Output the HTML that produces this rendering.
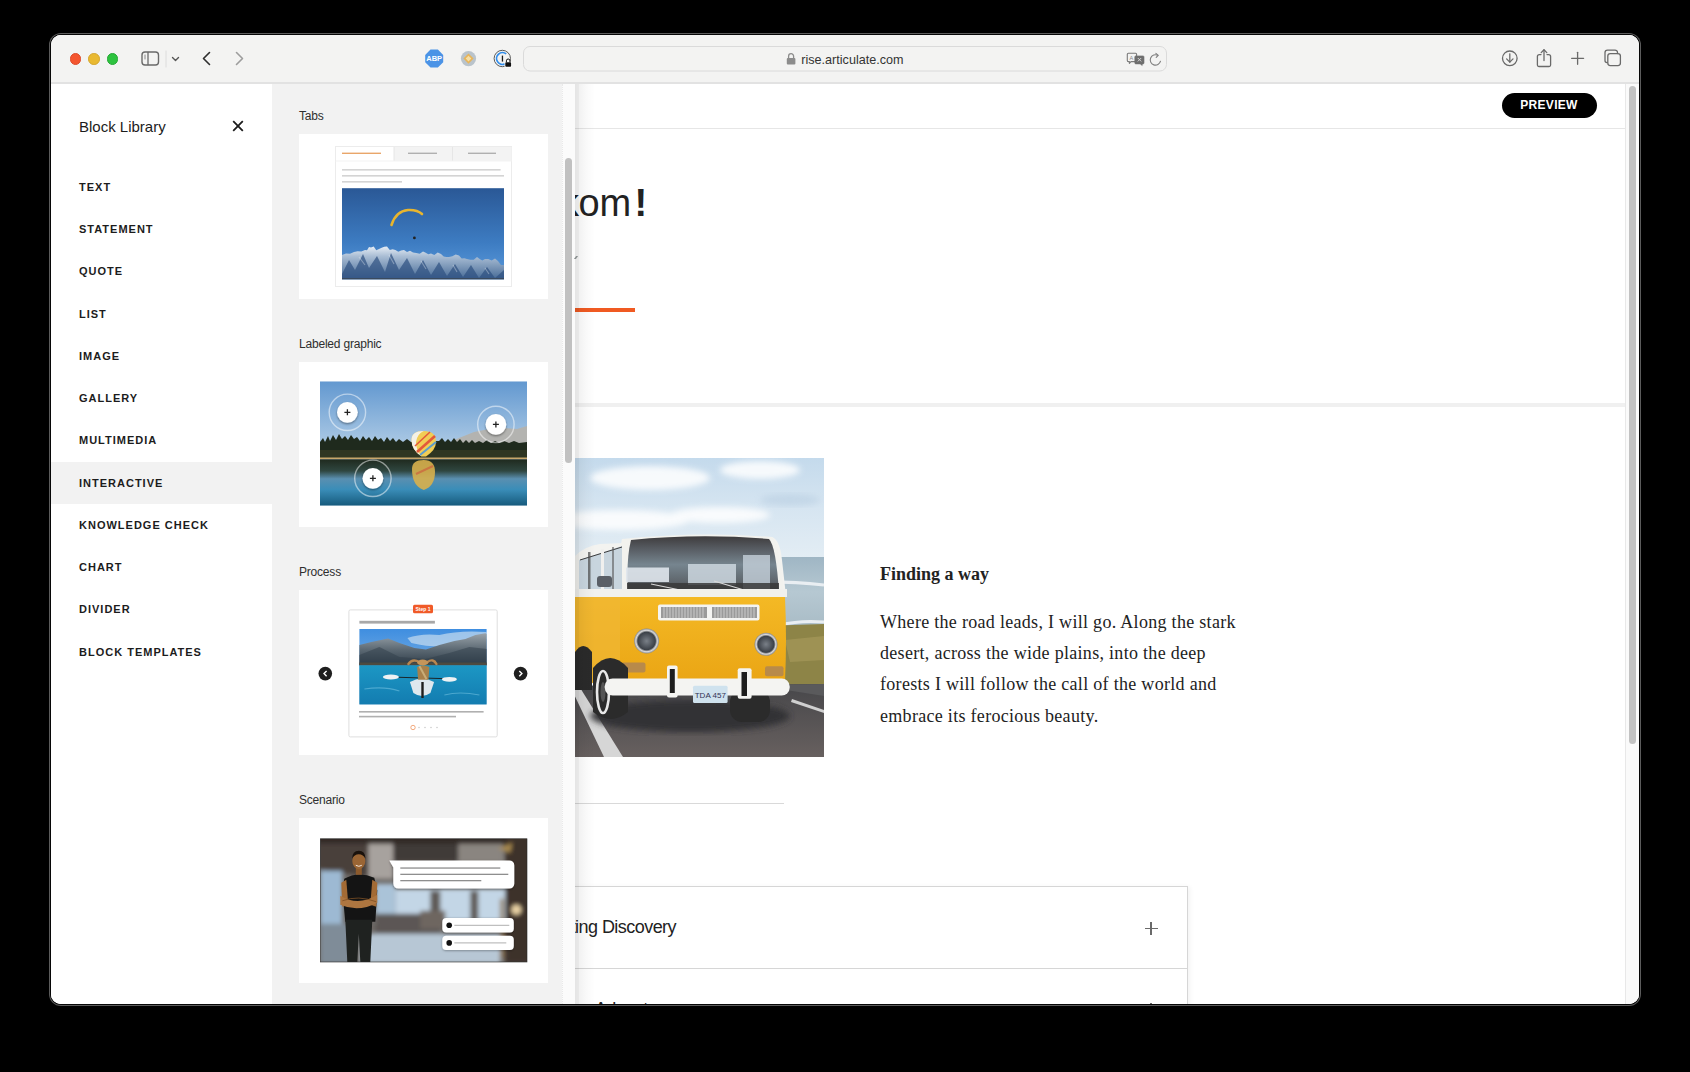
<!DOCTYPE html>
<html><head><meta charset="utf-8">
<style>
*{margin:0;padding:0;box-sizing:border-box}
html,body{width:1690px;height:1072px;background:#000;overflow:hidden;font-family:"Liberation Sans",sans-serif}
.a{position:absolute}
#win{position:absolute;left:51px;top:35px;width:1588px;height:969px;border-radius:10px;overflow:hidden;background:#fff;box-shadow:0 0 0 1px #070707,0 0 0 2px #5c5c5c}
#tb{position:absolute;left:0;top:0;width:1588px;height:49px;background:#f3f3f2;border-bottom:2px solid #e2e2e2}
#main{position:absolute;left:0;top:0;width:1588px;height:969px;background:#fff}
#side{position:absolute;left:0;top:49px;width:221px;height:920px;background:#fff}
#panel{position:absolute;left:221px;top:49px;width:290px;height:920px;background:#f2f2f2}
.nav{position:absolute;left:28px;font-size:11px;font-weight:bold;letter-spacing:1px;color:#1c1c1c;line-height:14px;white-space:nowrap}
.lbl{position:absolute;left:27px;font-size:12px;letter-spacing:-0.2px;color:#2e2e2e;line-height:14px;white-space:nowrap}
.card{position:absolute;left:27px;width:249px;height:165px;background:#fff}
.dot{position:absolute;top:18px;width:12px;height:12px;border-radius:50%}
</style></head><body>
<div id="win">
  <!-- main content -->
  <div id="main">
    <!-- header bar -->
    <div class="a" style="left:511px;top:93px;width:1063px;height:1px;background:#e6e6e6"></div>
    <div class="a" style="left:1451px;top:58px;width:95px;height:25px;border-radius:13px;background:#000;color:#fff;font-weight:bold;font-size:12px;letter-spacing:0.3px;text-align:center;line-height:25px;padding-right:1px">PREVIEW</div>
    <!-- title -->
    <div class="a" style="left:0;top:146px;width:528px;text-align:right;font-size:38px;color:#222;line-height:44px;white-space:nowrap">Welcome to Telk</div>
    <div class="a" style="left:527.5px;top:146px;font-size:38px;color:#222;line-height:44px">o</div>
    <div class="a" style="left:548.5px;top:146px;font-size:38px;color:#222;line-height:44px">m</div>
    <div class="a" style="left:583.5px;top:146px;font-size:38px;color:#222;line-height:44px;font-weight:bold">!</div>
    <div class="a" style="left:480px;top:273px;width:104px;height:4px;background:#f05a22"></div>
    <!-- section divider -->
    <div class="a" style="left:511px;top:368px;width:1063px;height:4px;background:#f0f0f0"></div>
    <!-- van image -->
    <svg class="a" id="van" style="left:470px;top:423px" width="303" height="299" viewBox="521 458 303 299">
      <defs>
        <linearGradient id="vsky" x1="0" y1="0" x2="0" y2="1">
          <stop offset="0" stop-color="#c4daec"/><stop offset="0.5" stop-color="#d6e5f1"/><stop offset="1" stop-color="#e3edf4"/>
        </linearGradient>
        <linearGradient id="vsea" x1="0" y1="0" x2="0" y2="1">
          <stop offset="0" stop-color="#9fb6c4"/><stop offset="0.5" stop-color="#b6c8d2"/><stop offset="1" stop-color="#a9bcc6"/>
        </linearGradient>
        <linearGradient id="vyel" x1="0" y1="0" x2="0" y2="1">
          <stop offset="0" stop-color="#f4b925"/><stop offset="1" stop-color="#eaa514"/>
        </linearGradient>
        <radialGradient id="vhl"><stop offset="0" stop-color="#7a8088"/><stop offset="0.7" stop-color="#3c4148"/><stop offset="0.85" stop-color="#d9d9d9"/><stop offset="1" stop-color="#8a8a8a"/></radialGradient>
        <filter id="vb"><feGaussianBlur stdDeviation="3"/></filter>
      </defs>
      <rect x="521" y="458" width="303" height="100" fill="url(#vsky)"/>
      <g filter="url(#vb)" fill="#fff" opacity="0.85">
        <ellipse cx="650" cy="478" rx="60" ry="12"/>
        <ellipse cx="760" cy="470" rx="40" ry="9"/>
        <ellipse cx="620" cy="520" rx="70" ry="10"/>
        <ellipse cx="720" cy="515" rx="50" ry="8"/>
      </g>
      <ellipse cx="790" cy="500" rx="30" ry="6" fill="#b9cfe2" opacity="0.6" filter="url(#vb)"/>
      <rect x="521" y="557" width="303" height="70" fill="url(#vsea)"/>
      <path d="M730 583 Q780 580 824 585" stroke="#e9eef2" stroke-width="3" fill="none"/>
      <path d="M780 625 Q800 620 824 622" stroke="#e9eef2" stroke-width="3" fill="none"/>
      <path d="M760 626 L824 624 L824 688 L760 688Z" fill="#8d8447"/>
      <path d="M785 640 L824 636 L824 660 L790 662Z" fill="#a39658" opacity="0.8"/>
      <linearGradient id="vroad" x1="0" y1="0" x2="0" y2="1"><stop offset="0" stop-color="#47474a"/><stop offset="1" stop-color="#67605f"/></linearGradient>
      <path d="M521 686 L824 684 L824 757 L521 757Z" fill="url(#vroad)"/>
      <path d="M690 686 L760 686 L824 696 L824 684Z" fill="#5a5a5c"/>
      <polygon points="570,686 579,686 623,757 604,757" fill="#d6d6d6"/>
      <polygon points="792,699 824,710 824,713 791,702" fill="#d0d0d0"/>
      <ellipse cx="690" cy="716" rx="100" ry="16" fill="#333336" filter="url(#vb)"/>
      <rect x="730" y="690" width="40" height="32" rx="12" fill="#2b2b2b"/>
      <!-- van roof / windows -->
      <linearGradient id="vws" x1="0" y1="0" x2="0" y2="1"><stop offset="0" stop-color="#3e3c3d"/><stop offset="0.2" stop-color="#55595f"/><stop offset="0.5" stop-color="#76858f"/><stop offset="0.8" stop-color="#5f666c"/><stop offset="1" stop-color="#3a3a3c"/></linearGradient>
      <path d="M575 556 Q585 546 600 544 L772 537 Q780 540 782 560 L786 596 L575 598Z" fill="#f3f3f0"/>
      <path d="M622 539 Q700 531 772 537 Q780 544 784 595 L620 595 Q617 560 622 539Z" fill="#f2f2ee"/>
      <path d="M631 540 Q700 533 769 539 Q776 546 779 593 L628 593 Q626 560 631 540Z" fill="url(#vws)"/>
      <rect x="626" y="567.5" width="43" height="14.5" fill="#dfe6ec" opacity="0.9"/>
      <rect x="688" y="564" width="48" height="21" fill="#cdd7df" opacity="0.85"/>
      <rect x="743" y="555" width="27" height="35" fill="#c4d0da" opacity="0.8"/>
      <rect x="627" y="583" width="152" height="10" fill="#3a3a3a" opacity="0.85"/>
      <path d="M651 584 L685 591" stroke="#d9d9d9" stroke-width="1.2"/>
      <path d="M714 581 L754 593" stroke="#d9d9d9" stroke-width="1.2"/>
      <path d="M579 560 L622 546 L622 590 L579 592Z" fill="#c8d5de"/>
      <path d="M580 560 L622 547" stroke="#3c3c3c" stroke-width="1"/>
      <rect x="588" y="552" width="2.5" height="39" fill="#4a4a4a" opacity="0.7"/>
      <rect x="601" y="549" width="3" height="42" fill="#f0f0ee"/>
      <rect x="612" y="547" width="2" height="44" fill="#5a5a5a" opacity="0.6"/>
      <rect x="597" y="576" width="15" height="11" rx="3" fill="#5a5f66"/>
      <rect x="575" y="589" width="212" height="8" fill="#f1f1ee"/>
      <!-- yellow body -->
      <path d="M575 597 L785 597 Q787 640 785 681 L575 683Z" fill="url(#vyel)"/>
      <path d="M575 597 L620 597 L620 681 L575 683Z" fill="#f0b735" opacity="0.7"/>
      <rect x="658" y="604.5" width="101.5" height="16" rx="2" fill="#f4f4f2"/>
      <rect x="661" y="607" width="46" height="11" fill="#9a9a9a"/>
      <rect x="712" y="607" width="45" height="11" fill="#9a9a9a"/>
      <g stroke="#d8d8d8" stroke-width="0.8">
        <path d="M664 607v11M667 607v11M670 607v11M673 607v11M676 607v11M679 607v11M682 607v11M685 607v11M688 607v11M691 607v11M694 607v11M697 607v11M700 607v11M703 607v11"/>
        <path d="M715 607v11M718 607v11M721 607v11M724 607v11M727 607v11M730 607v11M733 607v11M736 607v11M739 607v11M742 607v11M745 607v11M748 607v11M751 607v11M754 607v11"/>
      </g>
      <circle cx="646.6" cy="641" r="12.5" fill="url(#vhl)"/>
      <circle cx="766" cy="644.3" r="11.5" fill="url(#vhl)"/>
      <rect x="621.5" y="662.5" width="24" height="10" rx="2" fill="#b88a4a"/>
      <rect x="765" y="666.3" width="18.5" height="10" rx="2" fill="#b88a4a"/>
      <!-- wheels over body -->
      <path d="M575 652 Q583 640 592 652 L592 690 L575 690Z" fill="#2a2a2a"/>
      <path d="M593 668 Q610 648 628 668 L628 712 Q611 726 593 712Z" fill="#2b2b2b"/>
      <ellipse cx="603" cy="692" rx="6" ry="21" fill="none" stroke="#e8e8e8" stroke-width="2.6"/>
      <ellipse cx="603" cy="692" rx="2.5" ry="10" fill="#555"/>
      <!-- bumper -->
      <rect x="604.7" y="678.5" width="185" height="17" rx="8" fill="#f4f4f2"/>
      <rect x="667" y="665.5" width="10.6" height="32" rx="2" fill="#f4f4f2"/>
      <rect x="669.8" y="669" width="5" height="24" fill="#1d1d1d"/>
      <rect x="737.7" y="668.3" width="13.9" height="30.5" rx="2" fill="#f4f4f2"/>
      <rect x="741.5" y="672" width="5.5" height="24" fill="#1d1d1d"/>
      <rect x="693" y="685.7" width="34.6" height="17.3" rx="1.5" fill="#cfe2ee"/>
      <text x="710.3" y="698" font-family="Liberation Sans" font-size="8" fill="#335" text-anchor="middle">TDA 457</text>
    </svg>
    <div class="a" style="left:480px;top:768px;width:253px;height:1px;background:#d9d9d9"></div>
    <!-- text -->
    <div class="a" style="left:829px;top:528.3px;font-family:'Liberation Serif',serif;font-weight:bold;font-size:18px;color:#222;white-space:nowrap;line-height:22px">Finding a way</div>
    <div class="a" style="left:829px;top:571.8px;width:440px;font-family:'Liberation Serif',serif;font-size:18px;letter-spacing:0.3px;color:#222;line-height:31.3px;white-space:nowrap">Where the road leads, I will go. Along the stark<br>desert, across the wide plains, into the deep<br>forests I will follow the call of the world and<br>embrace its ferocious beauty.</div>
    <!-- accordion -->
    <div class="a" style="left:400px;top:851px;width:737px;height:200px;border:1px solid #d6d6d6;background:#fff;box-shadow:2px 1px 5px rgba(0,0,0,0.05)"></div>
    <div class="a" style="left:400px;top:933px;width:737px;height:1px;background:#d6d6d6"></div>
    <div class="a" style="left:25px;top:881px;width:600px;text-align:right;font-size:18px;letter-spacing:-0.55px;color:#222;line-height:22px;white-space:nowrap">Igniting Discovery</div>
    <div class="a" style="left:1093.5px;top:892.6px;width:13px;height:1.2px;background:#6a6a6a"></div>
    <div class="a" style="left:1099.4px;top:886.6px;width:1.2px;height:13px;background:#6a6a6a"></div>
    <div class="a" style="left:1093.5px;top:974px;width:13px;height:1.2px;background:#6a6a6a"></div>
    <div class="a" style="left:1099.4px;top:967.6px;width:1.2px;height:13px;background:#6a6a6a"></div>
    <div class="a" style="left:25px;top:963px;width:600px;text-align:right;font-size:18px;letter-spacing:-0.55px;color:#222;line-height:22px;white-space:nowrap">Gaining Advantage</div>
    <!-- right scrollbar -->
    <div class="a" style="left:1574px;top:49px;width:14px;height:920px;background:#fafafa;border-left:1px solid #e8e8e8"></div>
    <div class="a" style="left:1578px;top:51px;width:7px;height:658px;border-radius:4px;background:#c2c2c2"></div>
    <!-- shadow of panel -->
    <div class="a" style="left:511px;top:49px;width:13px;height:920px;background:#fbfbfb;border-left:1px dotted #e9e9e9"></div>
    <div class="a" style="left:523.5px;top:49px;width:20px;height:920px;background:linear-gradient(90deg,rgba(0,0,0,0.105),rgba(0,0,0,0.09) 3.5px,rgba(0,0,0,0.05) 4.5px,rgba(0,0,0,0.025) 11px,rgba(0,0,0,0) 20px)"></div>
    <div class="a" style="left:524.3px;top:220.5px;width:1.6px;height:3px;background:#8a9090;transform:skewX(-35deg)"></div>
    <div class="a" style="left:514px;top:123px;width:7px;height:305px;border-radius:4px;background:#c1c1c1"></div>
  </div>
  <!-- sidebar -->
  <div id="side">
    <div class="a" style="left:28px;top:34px;font-size:15px;color:#1c1c1c;line-height:18px;white-space:nowrap">Block Library</div>
    <svg class="a" style="left:179.5px;top:35px" width="14" height="14" viewBox="0 0 14 14"><path d="M2.2 2.2L11.8 11.8M11.8 2.2L2.2 11.8" stroke="#1c1c1c" stroke-width="1.8"/></svg>
    <div class="a" style="left:0;top:378px;width:221px;height:42px;background:#f2f2f2"></div>
    <div class="nav" style="top:96px">TEXT</div>
    <div class="nav" style="top:138px">STATEMENT</div>
    <div class="nav" style="top:180px">QUOTE</div>
    <div class="nav" style="top:223px">LIST</div>
    <div class="nav" style="top:265px">IMAGE</div>
    <div class="nav" style="top:307px">GALLERY</div>
    <div class="nav" style="top:349px">MULTIMEDIA</div>
    <div class="nav" style="top:392px">INTERACTIVE</div>
    <div class="nav" style="top:434px">KNOWLEDGE CHECK</div>
    <div class="nav" style="top:476px">CHART</div>
    <div class="nav" style="top:518px">DIVIDER</div>
    <div class="nav" style="top:561px">BLOCK TEMPLATES</div>
  </div>
  <div id="panel">
    <div class="lbl" style="top:25px">Tabs</div>
    <div class="card" style="top:50px" id="c1">
      <svg width="249" height="165" viewBox="0 0 249 165">
        <defs>
          <linearGradient id="sky1" x1="0" y1="0" x2="0" y2="1">
            <stop offset="0" stop-color="#2a5896"/><stop offset="0.6" stop-color="#3d7cc2"/><stop offset="1" stop-color="#5c9bdc"/>
          </linearGradient>
          <linearGradient id="mt1" x1="0" y1="0" x2="0" y2="1">
            <stop offset="0" stop-color="#e6edf5"/><stop offset="0.3" stop-color="#a9bdd4"/><stop offset="1" stop-color="#466a96"/>
          </linearGradient>
        </defs>
        <rect x="36.5" y="12.5" width="176" height="140" fill="#fff" stroke="#ececec"/>
        <rect x="95" y="13" width="58.5" height="14" fill="#f3f3f3"/>
        <rect x="153.5" y="13" width="59" height="14" fill="#f3f3f3"/>
        <line x1="153.5" y1="13" x2="153.5" y2="27" stroke="#e6e6e6"/>
        <line x1="95" y1="13" x2="95" y2="27" stroke="#e6e6e6"/>
        <line x1="36.5" y1="27" x2="212.5" y2="27" stroke="#f3f3f3"/>
        <rect x="43" y="18.6" width="39" height="1.4" fill="#e9a66a"/>
        <rect x="109" y="18.6" width="29" height="1.4" fill="#b0b0b0"/>
        <rect x="169" y="18.6" width="28" height="1.4" fill="#b0b0b0"/>
        <rect x="43" y="35.2" width="158.6" height="1.3" fill="#cacaca"/>
        <rect x="43" y="41.2" width="162" height="1.3" fill="#cacaca"/>
        <rect x="43" y="47.2" width="60" height="1.3" fill="#cacaca"/>
        <rect x="43" y="54.2" width="162" height="91" fill="url(#sky1)"/>
        <path d="M43 145.2 L43 121 L47.0 119.5 L51.0 119.7 L55.0 118.0 L58.7 117.3 L62.3 117.6 L66.0 116.0 L68.0 116.2 L70.0 113.1 L72.0 113.5 L74.7 112.6 L77.3 116.3 L80.0 115.0 L82.7 113.7 L85.3 112.8 L88.0 112.5 L90.8 116.1 L93.6 115.2 L96.4 116.0 L99.3 117.8 L102.1 116.4 L105.0 116.0 L108.0 117.9 L111.0 116.7 L114.0 118.4 L117.3 119.1 L120.7 119.8 L124.0 117.5 L126.7 118.8 L129.3 120.3 L132.0 119.5 L135.3 120.9 L138.7 118.6 L142.0 120.0 L144.7 122.5 L147.3 122.9 L150.0 123.0 L153.3 122.2 L156.7 120.6 L160.0 121.5 L162.7 124.6 L165.3 124.2 L168.0 125.0 L171.3 125.7 L174.7 125.7 L178.0 123.0 L180.7 125.0 L183.3 126.5 L186.0 125.0 L189.3 124.9 L192.7 126.4 L196.0 124.5 L199.0 126.9 L202.0 131.1 L205.0 131.0 L205 145.2Z" fill="url(#mt1)"/>
        <path d="M43 140 L50 126 L56 136 L64 120 L70 134 L78 122 L86 138 L92 119 L100 136 L108 124 L116 140 L124 126 L132 141 L140 128 L148 142 L156 130 L164 143 L172 131 L180 144 L188 133 L196 144 L205 136 L205 145.2 L43 145.2Z" fill="#2e5080" opacity="0.7"/>
        <path d="M60 123 L66 131 M90 121 L95 130 M122 127 L127 135 M154 131 L158 138 M186 134 L190 140" stroke="#eef3f8" stroke-width="1.1" opacity="0.35"/>
        <rect x="43" y="144" width="162" height="1.2" fill="#3a4a5e"/>
        <path d="M92.5 91 Q97 77 109 76 Q118 75.5 123 80" fill="none" stroke="#e8b52e" stroke-width="2.6" stroke-linecap="round"/>
        <circle cx="115.4" cy="103.9" r="1.4" fill="#222"/>
      </svg>
    </div>
    <div class="lbl" style="top:253px">Labeled graphic</div>
    <div class="card" style="top:278px" id="c2">
      <svg width="249" height="165" viewBox="0 0 249 165">
        <defs>
          <linearGradient id="sky2" x1="0" y1="0" x2="0" y2="1">
            <stop offset="0" stop-color="#6298d0"/><stop offset="0.5" stop-color="#aac8e4"/><stop offset="1" stop-color="#cfe0ee"/>
          </linearGradient>
          <linearGradient id="wat2" x1="0" y1="0" x2="0" y2="1">
            <stop offset="0" stop-color="#1f2a1e"/><stop offset="0.25" stop-color="#2f4640"/><stop offset="0.42" stop-color="#5a8fb0"/><stop offset="0.65" stop-color="#3a8db8"/><stop offset="1" stop-color="#165a7c"/>
          </linearGradient>
          <filter id="sh2" x="-50%" y="-50%" width="200%" height="200%"><feDropShadow dx="0" dy="1.2" stdDeviation="1.2" flood-color="#000" flood-opacity="0.45"/></filter>
          <clipPath id="cp2"><rect x="21" y="19.3" width="207" height="124.4"/></clipPath>
        </defs>
        <g clip-path="url(#cp2)">
        <rect x="21" y="19.3" width="207" height="124.4" fill="url(#sky2)"/>
        <path d="M155 78 L175 70 L190 67 L205 66 L218 67 L228 64 L228 82 L155 82Z" fill="#b3b3b0"/>
        <path d="M21 96 L21 80 L24 76 L26 80 L29 74 L31 79 L34 73 L37 78 L40 72 L43 77 L46 74 L49 78 L52 73 L55 77 L58 75 L61 79 L64 74 L67 78 L70 75 L73 79 L76 74 L79 78 L82 76 L85 80 L88 75 L91 79 L94 76 L97 80 L100 77 L104 80 L108 77 L112 80 L140 79 L143 76 L146 80 L149 77 L152 80 L155 76 L158 80 L161 77 L164 81 L167 78 L170 81 L173 78 L176 81 L180 79 L184 81 L188 78 L192 81 L196 79 L200 81 L205 79 L210 81 L215 79 L220 81 L228 80 L228 96Z" fill="#1f2a1d"/>
        <path d="M21 96 L21 88 L228 88 L228 96Z" fill="#3a4026" opacity="0.6"/>
        <rect x="21" y="95.5" width="207" height="1.8" fill="#c8a76c"/>
        <rect x="21" y="97.3" width="207" height="46.4" fill="url(#wat2)"/>
        <path d="M112.5 78 Q112.5 69 124.8 69 Q137 69 137 80 Q137 88 127 94.4 L122.5 94.4 Q112.5 88 112.5 78Z" fill="#f1cd55"/>
        <path d="M112.5 78 Q112.5 69 124.8 69 Q118 72 117 80 Q117 88 122.5 94.4 Q112.5 88 112.5 78Z" fill="#f4f1e6"/>
        <path d="M118 90 L136 74" stroke="#e4593a" stroke-width="2.6"/>
        <path d="M121 93 L137 80" stroke="#5c9ccc" stroke-width="2"/>
        <path d="M116 84 L131 70" stroke="#e4593a" stroke-width="1.6"/>
        <path d="M113 107 Q113 98 124.8 98 Q136 98 136 110 Q136 124 124.8 128 Q113 124 113 107Z" fill="#d8b04c" opacity="0.9"/>
        <path d="M117 112 L134 104" stroke="#cc6a40" stroke-width="2" opacity="0.8"/>
        </g>
        <g fill="none" stroke="#fff" stroke-opacity="0.5" stroke-width="1.4">
          <circle cx="48.4" cy="50.3" r="18.2"/><circle cx="196.9" cy="62.4" r="18.2"/><circle cx="73.9" cy="116.3" r="18.2"/>
        </g>
        <g filter="url(#sh2)" fill="#fff">
          <circle cx="48.4" cy="50.3" r="10.4"/><circle cx="196.9" cy="62.4" r="10.4"/><circle cx="73.9" cy="116.3" r="10.4"/>
        </g>
        <g stroke="#222" stroke-width="1.3">
          <path d="M45.4 50.3h6M48.4 47.3v6"/><path d="M193.9 62.4h6M196.9 59.4v6"/><path d="M70.9 116.3h6M73.9 113.3v6"/>
        </g>
      </svg>
    </div>
    <div class="lbl" style="top:481px">Process</div>
    <div class="card" style="top:506px" id="c3">
      <svg width="249" height="165" viewBox="0 0 249 165">
        <defs>
          <linearGradient id="sky3" x1="0" y1="0" x2="0" y2="1">
            <stop offset="0" stop-color="#3f8ee0"/><stop offset="1" stop-color="#a9cbe6"/>
          </linearGradient>
          <linearGradient id="mt3" x1="0" y1="0" x2="0" y2="1">
            <stop offset="0" stop-color="#9aa3aa"/><stop offset="0.5" stop-color="#5d6a74"/><stop offset="1" stop-color="#2e3c48"/>
          </linearGradient>
          <linearGradient id="wat3" x1="0" y1="0" x2="0" y2="1">
            <stop offset="0" stop-color="#1c97c4"/><stop offset="1" stop-color="#137cb0"/>
          </linearGradient>
        </defs>
        <rect x="49.9" y="19.9" width="148.3" height="127" rx="1.5" fill="#fff" stroke="#dedede"/>
        <rect x="114" y="14.7" width="20" height="8.6" rx="1.5" fill="#f05a28"/>
        <text x="124" y="21.2" font-family="Liberation Sans" font-weight="bold" font-size="5" fill="#fff" text-anchor="middle">Step 1</text>
        <rect x="60.4" y="30.8" width="75.5" height="2.8" fill="#a8a8a8"/>
        <g transform="translate(60.4 39)">
        <rect x="0" y="0" width="127.2" height="75.4" fill="url(#sky3)"/>
        <path d="M48 9 Q62 4 80 6 Q100 1 127.2 3 L127.2 10 Q110 12 95 17 Q72 19 52 14Z" fill="#dbe7f1" opacity="0.6"/>
        <path d="M0 16 L12 13 L28.7 9.5 L40 14 L55 19 L66.5 20.6 L80 16 L95 12 L106 10 L116 6 L126 4.3 L127.2 5 L127.2 36.3 L0 36.3Z" fill="url(#mt3)"/>
        <path d="M0 26 L20 18 L40 28 L66 30 L90 24 L110 18 L127.2 20 L127.2 36.3 L0 36.3Z" fill="#2f3e4a" opacity="0.5"/>
        <rect x="0" y="33.5" width="127.2" height="3" fill="#4d4a40"/>
        <rect x="0" y="36.3" width="127.2" height="39.1" fill="url(#wat3)"/>
        <path d="M5 60 Q25 57 40 62 M85 66 Q100 62 120 66" stroke="#6fc0e0" stroke-width="1.2" fill="none" opacity="0.6"/>
        <path d="M30 48 L97 50" stroke="#1a1a1a" stroke-width="0.9"/>
        <ellipse cx="31.5" cy="48" rx="8" ry="2.4" fill="#eef2f4"/>
        <ellipse cx="90" cy="50.3" rx="7.5" ry="2.4" fill="#eef2f4"/>
        <path d="M50.5 53 Q62.5 46 74.7 53 L71 64 Q62.5 70 54 64Z" fill="#dfe8ee"/>
        <path d="M57.7 38 Q63.8 35 70 38 L69 50.7 L58.7 50.7Z" fill="#a8804a"/>
        <path d="M60 37 L67 50" stroke="#d8c08a" stroke-width="2" opacity="0.7"/>
        <path d="M49 35 Q53 29 60 33 M68 33 Q74 29 77 35" stroke="#b88650" stroke-width="2.4" fill="none" stroke-linecap="round"/>
        <ellipse cx="63.3" cy="33.5" rx="5.5" ry="3" fill="#c5955a"/>
        <rect x="61.9" y="53" width="2.4" height="16" fill="#1e1e1e"/>
        </g>
        <rect x="60" y="121" width="124.6" height="1.6" fill="#b0b0b0"/>
        <rect x="60" y="125.8" width="97" height="1.6" fill="#b0b0b0"/>
        <circle cx="114" cy="137.5" r="2.2" fill="none" stroke="#f0a070" stroke-width="0.9"/>
        <circle cx="120" cy="137.5" r="0.8" fill="#ccc"/><circle cx="126" cy="137.5" r="0.8" fill="#ccc"/><circle cx="132" cy="137.5" r="0.8" fill="#ccc"/><circle cx="138" cy="137.5" r="0.8" fill="#ccc"/>
        <circle cx="26.3" cy="83.6" r="6.8" fill="#1f1f1f"/>
        <polyline points="27.6,81 25,83.6 27.6,86.2" fill="none" stroke="#fff" stroke-width="1.4"/>
        <circle cx="221.6" cy="83.6" r="6.8" fill="#1f1f1f"/>
        <polyline points="220.3,81 222.9,83.6 220.3,86.2" fill="none" stroke="#fff" stroke-width="1.4"/>
      </svg>
    </div>
    <div class="lbl" style="top:709px">Scenario</div>
    <div class="card" style="top:734px" id="c4">
      <svg width="249" height="165" viewBox="0 0 249 165">
        <defs>
          <filter id="bl4" x="-20%" y="-20%" width="140%" height="140%"><feGaussianBlur stdDeviation="2.2"/></filter>
          <clipPath id="cp4"><rect x="0" y="0" width="206.7" height="123.2"/></clipPath>
          <filter id="sh4" x="-20%" y="-20%" width="140%" height="140%"><feDropShadow dx="0" dy="0.8" stdDeviation="0.8" flood-color="#000" flood-opacity="0.35"/></filter>
        </defs>
        <g transform="translate(21.3 20.8)">
        <g clip-path="url(#cp4)">
          <rect x="0" y="0" width="206.7" height="123.2" fill="#6e6a67"/>
          <g filter="url(#bl4)">
            <rect x="-5" y="-5" width="220" height="12" fill="#332a25"/>
            <path d="M-5 5 L70 5 L60 40 L-5 30Z" fill="#4a403a"/>
            <rect x="0" y="32" width="22" height="55" fill="#9db9d3"/>
            <rect x="0" y="85" width="30" height="40" fill="#7f8c98"/>
            <rect x="48" y="5" width="25" height="35" fill="#a7a29e"/>
            <rect x="73" y="5" width="65" height="18" fill="#3f3b39"/>
            <rect x="138" y="5" width="45" height="25" fill="#8a8580"/>
            <rect x="75" y="50" width="110" height="32" fill="#c3d6e6"/>
            <rect x="55" y="45" width="20" height="40" fill="#aac3d8"/>
            <rect x="110" y="52" width="10" height="30" fill="#5e5a56"/>
            <rect x="150" y="52" width="8" height="30" fill="#5e5a56"/>
            <rect x="55" y="75" width="65" height="25" fill="#5c5654"/>
            <rect x="100" y="72" width="25" height="18" fill="#6e6660"/>
            <rect x="40" y="95" width="140" height="30" fill="#b7c7d5"/>
            <rect x="185" y="-5" width="30" height="130" fill="#3c3029"/>
            <circle cx="196" cy="71" r="5" fill="#e9d2a4"/>
            <path d="M178 10 L192 4 L190 14Z" fill="#a88a50"/>
            <rect x="180" y="60" width="3" height="60" fill="#8a6a3a"/>
          </g>
          <!-- woman -->
          <path d="M24 40 Q38 32 54 39 L57 52 L55 83 L25 83 L22 52Z" fill="#141414"/>
          <path d="M25 81 L52 81 L50 123.2 L40 123.2 L38.5 95 L37 123.2 L27 123.2Z" fill="#1f2220"/>
          <path d="M21 44 L26 41 L28 66 L22 68Z" fill="#a36b35"/>
          <path d="M57 44 L52 41 L50 66 L56 68Z" fill="#a36b35"/>
          <path d="M20 57 Q38 68 57 56 L57 64 Q38 74 20 66Z" fill="#ae7640"/>
          <path d="M22 62 Q38 56 56 63" stroke="#7c4f25" stroke-width="0.8" fill="none"/>
          <rect x="35.5" y="28" width="6" height="8" fill="#8c5a2c"/>
          <ellipse cx="38.5" cy="22.2" rx="6.5" ry="8.3" fill="#9a6534"/>
          <path d="M31.8 20 Q32 12 38.5 12 Q45 12 45.2 20 Q43 15.5 38.5 15.5 Q34 15.5 31.8 20Z" fill="#1a120c"/>
          <path d="M35.5 26.5 Q38.5 28.5 41.5 26.5" stroke="#f2e6dc" stroke-width="1" fill="none"/>
          <!-- bubble -->
          <g filter="url(#sh4)" fill="#fff">
            <path d="M78 21.6 h111 a5 5 0 0 1 5 5 v18.2 a5 5 0 0 1 -5 5 h-111 a5 5 0 0 1 -5 -5 v-16 l-4 -7.2z"/>
            <rect x="122" y="79.3" width="71.5" height="14.4" rx="4"/>
            <rect x="122" y="96.9" width="71.5" height="14.4" rx="4"/>
          </g>
          <rect x="80" y="28.6" width="100" height="1.3" fill="#8e8e8e"/>
          <rect x="80" y="34.9" width="108" height="1.3" fill="#8e8e8e"/>
          <rect x="80" y="41.2" width="81" height="1.3" fill="#8e8e8e"/>
          <circle cx="128.9" cy="86.5" r="2.8" fill="#111"/>
          <circle cx="128.9" cy="104.1" r="2.8" fill="#111"/>
          <rect x="134" y="86" width="55" height="1" fill="#b0b0b0"/>
          <rect x="134" y="103.6" width="52" height="1" fill="#b0b0b0"/>
        </g>
        <rect x="0" y="0" width="206.7" height="123.2" fill="none" stroke="#2a2a2a" stroke-width="0.6"/>
        </g>
      </svg>
    </div>
  </div>
  <!-- toolbar -->
  <div id="tb">
    <div class="dot" style="left:18.5px;top:18.3px;width:11.6px;height:11.6px;background:#f4552f;border:0.5px solid #dc4a2a"></div>
    <div class="dot" style="left:37px;top:18.3px;width:11.6px;height:11.6px;background:#e9b931;border:0.5px solid #d4a52a"></div>
    <div class="dot" style="left:55.5px;top:18.3px;width:11.6px;height:11.6px;background:#2dc33f;border:0.5px solid #24a834"></div>
    <svg class="a" style="left:0;top:0" width="1588" height="48" viewBox="0 0 1588 48">
      <g fill="none" stroke-linecap="round" stroke-linejoin="round">
        <rect x="91" y="17" width="16.5" height="13" rx="3" stroke="#6a6a6a" stroke-width="1.4"/>
        <line x1="97" y1="17.5" x2="97" y2="29.5" stroke="#6a6a6a" stroke-width="1.3"/>
        <line x1="94" y1="20" x2="94" y2="24" stroke="#8a8a8a" stroke-width="1"/>
        <line x1="115" y1="16" x2="115" y2="32" stroke="#dcdcdc" stroke-width="1"/>
        <polyline points="121.5,22.5 124.5,25.5 127.5,22.5" stroke="#555" stroke-width="1.4"/>
        <polyline points="158.5,17.5 152.5,23.5 158.5,29.5" stroke="#2e2e2e" stroke-width="1.6"/>
        <polyline points="185.5,17.5 191.5,23.5 185.5,29.5" stroke="#9d9d9d" stroke-width="1.6"/>
      </g>
      <!-- ABP -->
      <polygon points="379.5,14.6 386.9,14.6 392.2,19.9 392.2,27.3 386.9,32.6 379.5,32.6 374.2,27.3 374.2,19.9" fill="#4b93e6"/>
      <text x="383.2" y="26.3" font-family="Liberation Sans" font-weight="bold" font-size="7.5" fill="#fff" text-anchor="middle">ABP</text>
      <!-- ext2 -->
      <circle cx="417.5" cy="23.6" r="7.6" fill="#b9c3cb"/>
      <polygon points="417.5,18.5 422.6,23.6 417.5,28.7 412.4,23.6" fill="#e7b45a"/>
      <polygon points="417.5,20.8 420.3,23.6 417.5,26.4 414.7,23.6" fill="#f6dfa5"/>
      <!-- 1password -->
      <circle cx="451.3" cy="23.5" r="8.2" fill="none" stroke="#5a5a5a" stroke-width="1"/>
      <path d="M455.2 18.9 A5.9 5.9 0 1 0 453.8 28.9" fill="none" stroke="#2f8ceb" stroke-width="1.7"/>
      <rect x="450.8" y="20.6" width="1.3" height="6" fill="#1a1a1a"/>
      <rect x="453.6" y="26.4" width="7.2" height="6" rx="1" fill="#fff"/>
      <rect x="454.3" y="27.2" width="5.8" height="4.6" rx="0.8" fill="#111"/>
      <path d="M455.4 27.2 v-1.4 a1.8 1.8 0 0 1 3.6 0 v1.4" fill="none" stroke="#111" stroke-width="1"/>
      <!-- address bar -->
      <rect x="472.5" y="11.5" width="643" height="24.5" rx="6.5" fill="#f3f3f2" stroke="#dadada" stroke-width="1"/>
      <rect x="735.8" y="23" width="8.6" height="6.6" rx="1" fill="#8c8c8c"/>
      <path d="M737.6 23 v-1.8 a2.5 2.5 0 0 1 5 0 v1.8" fill="none" stroke="#8c8c8c" stroke-width="1.3"/>
      <text x="750.3" y="28.8" font-family="Liberation Sans" font-size="12.6" fill="#333">rise.articulate.com</text>
      <!-- translate -->
      <path d="M1077.3 18.3 h7.3 a1 1 0 0 1 1 1 v6.3 a1 1 0 0 1 -1 1 h-4.6 l-1.6 1.8 v-1.8 h-1.1 a1 1 0 0 1 -1 -1 v-6.3 a1 1 0 0 1 1 -1z" fill="#f3f3f2" stroke="#7a7a7a" stroke-width="1.1" stroke-linejoin="round"/>
      <text x="1078.6" y="24.6" font-family="Liberation Sans" font-size="5.5" fill="#888">A</text>
      <path d="M1084.8 20.9 h7.2 a1 1 0 0 1 1 1 v6 a1 1 0 0 1 -1 1 h-0.8 v1.6 l-2 -1.6 h-4.4 a1 1 0 0 1 -1 -1 v-6 a1 1 0 0 1 1 -1z" fill="#6e6e6e" stroke="#6e6e6e" stroke-width="0.6"/>
      <path d="M1086.8 23 l3.4 3.4 M1090.2 23 l-3.4 3.4" stroke="#dcdcdc" stroke-width="0.9"/>
      <!-- reload -->
      <path d="M1109.5 26.2 A5.2 5.2 0 1 1 1106.8 20.3" fill="none" stroke="#7f7f7f" stroke-width="1.1" stroke-linecap="round"/>
      <polyline points="1104.9,18.4 1107.2,20.3 1105.2,22.4" fill="none" stroke="#7f7f7f" stroke-width="1.1" stroke-linecap="round" stroke-linejoin="round"/>
      <!-- right icons -->
      <g fill="none" stroke="#6a6a6a" stroke-width="1.3" stroke-linecap="round" stroke-linejoin="round">
        <circle cx="1458.8" cy="23.3" r="7.3"/>
        <line x1="1458.8" y1="18.8" x2="1458.8" y2="27"/>
        <polyline points="1455.6,23.9 1458.8,27.1 1462,23.9"/>
        <path d="M1490 19.6 h-1.6 a2 2 0 0 0 -2 2 v8.4 a1.5 1.5 0 0 0 1.5 1.5 h10.2 a1.5 1.5 0 0 0 1.5 -1.5 v-8.4 a2 2 0 0 0 -2 -2 h-1.6"/>
        <line x1="1493" y1="15" x2="1493" y2="25.5"/>
        <polyline points="1490.2,17.6 1493,14.8 1495.8,17.6"/>
        <line x1="1520.6" y1="23.3" x2="1532.6" y2="23.3"/>
        <line x1="1526.6" y1="17.3" x2="1526.6" y2="29.3"/>
        <rect x="1556.8" y="18.6" width="12.6" height="12" rx="2.5"/>
        <path d="M1556.3 27.6 h-0.3 a2 2 0 0 1 -2 -2 v-8 a2.5 2.5 0 0 1 2.5 -2.5 h7.5 a2.5 2.5 0 0 1 2.5 2.5 v1"/>
      </g>
    </svg>
  </div>
</div>
</body></html>
